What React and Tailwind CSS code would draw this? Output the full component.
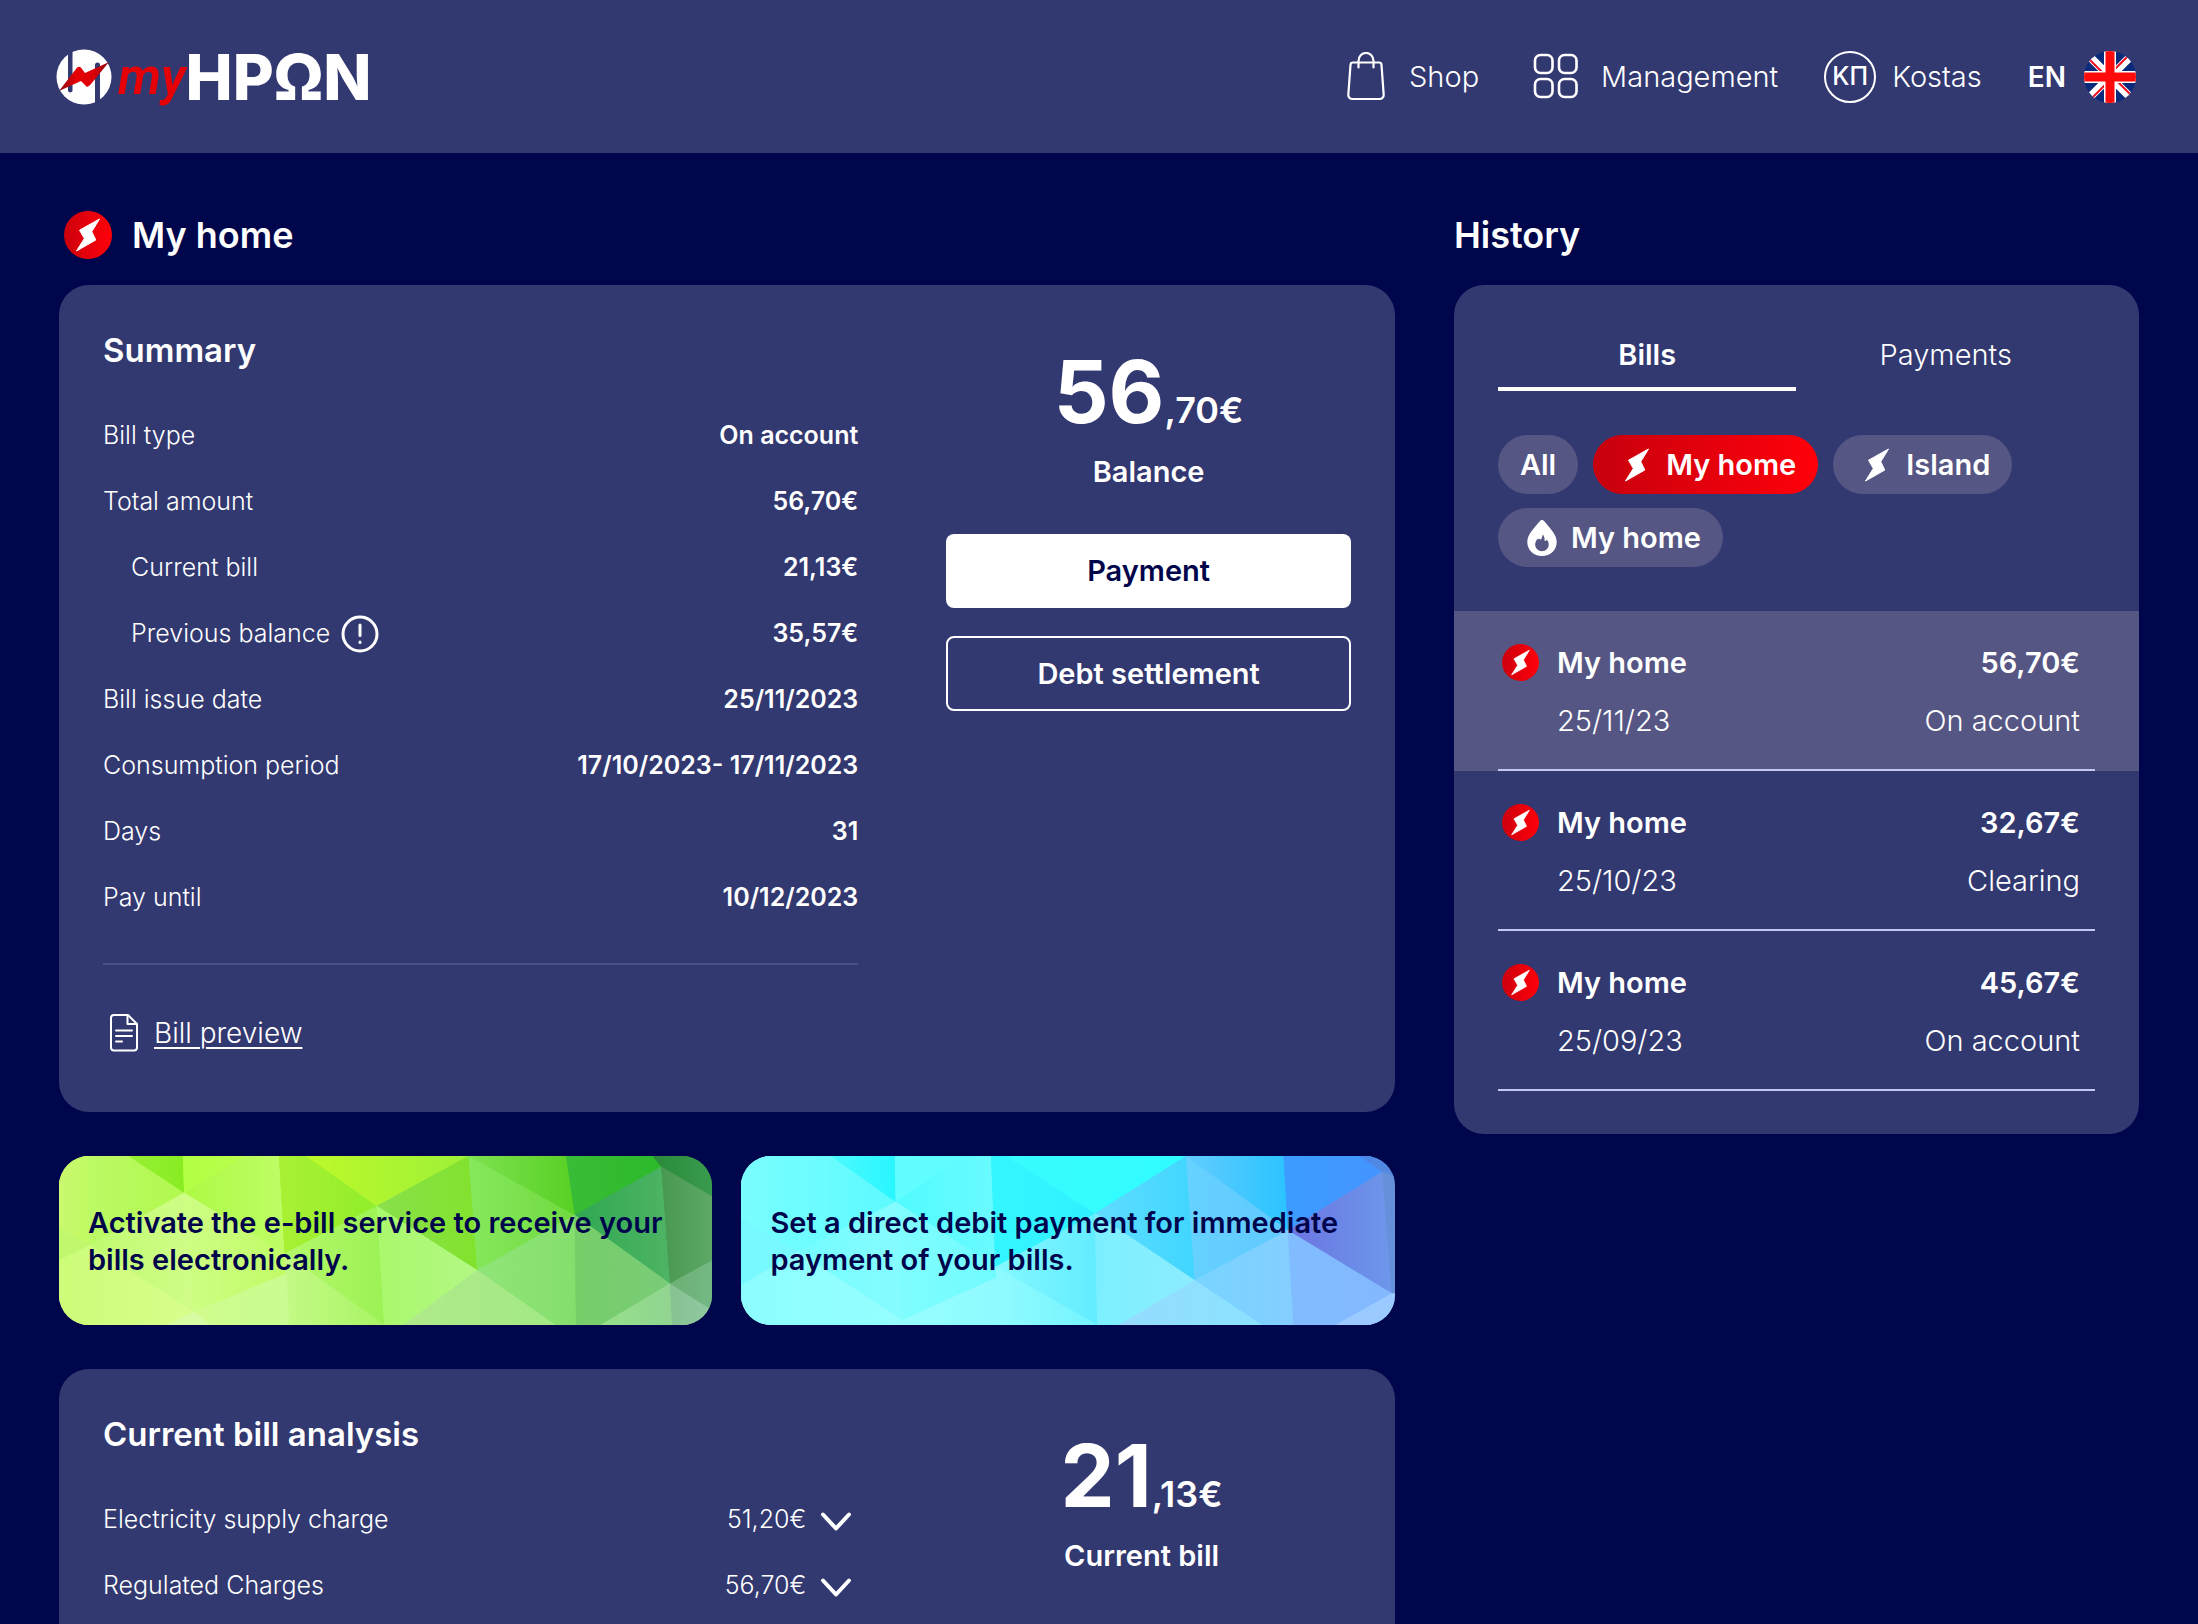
import React, { useState } from 'react';

const summaryRows = [
  { label: 'Bill type', value: 'On account' },
  { label: 'Total amount', value: '56,70€' },
  { label: 'Current bill', value: '21,13€', nested: true },
  { label: 'Previous balance', value: '35,57€', nested: true, info: true },
  { label: 'Bill issue date', value: '25/11/2023' },
  { label: 'Consumption period', value: '17/10/2023- 17/11/2023' },
  { label: 'Days', value: '31' },
  { label: 'Pay until', value: '10/12/2023' },
];

const charges = [
  { label: 'Electricity supply charge', value: '51,20€' },
  { label: 'Regulated Charges', value: '56,70€' },
];

const filters = [
  { id: 'all', label: 'All' },
  { id: 'home-power', label: 'My home', icon: 'bolt' },
  { id: 'island', label: 'Island', icon: 'bolt' },
  { id: 'home-gas', label: 'My home', icon: 'flame' },
];

const bills = [
  { id: 1, name: 'My home', date: '25/11/23', amount: '56,70€', type: 'On account' },
  { id: 2, name: 'My home', date: '25/10/23', amount: '32,67€', type: 'Clearing' },
  { id: 3, name: 'My home', date: '25/09/23', amount: '45,67€', type: 'On account' },
];

// facets: [points, left fill, right fill]
const greenFacets = [
  ['19,28 85,28 90,295 19,245', '#cbf870', '#c0fb62'],
  ['85,28 180,28 308,138 90,295', '#bcfa66', '#b2f84e'],
  ['180,28 305,28 308,138', '#98f034', '#88ec22'],
  ['305,28 450,28 308,138', '#b2ff44', '#baff4c'],
  ['450,28 527,28 540,320 308,138', '#aef944', '#bffd66'],
  ['90,295 308,138 330,495', '#c0fb70', '#d0fd88'],
  ['308,138 540,320 545,380 330,495', '#cefe84', '#c0fb66'],
  ['527,28 590,28 753,178 540,320', '#aaf034', '#90ee2a'],
  ['590,28 965,28 753,178', '#bcf92a', '#9ef038'],
  ['753,178 965,28 985,370', '#8ae04c', '#82e22c'],
  ['965,28 1210,205 985,370', '#86e85c', '#70da40'],
  ['965,28 1190,28 1210,205', '#7ee250', '#58d024'],
  ['1190,28 1390,28 1410,60 1210,205', '#3abc36', '#2cba2a'],
  ['1410,60 1210,205 1430,410', '#30a852', '#4eb464'],
  ['1390,28 1528,28 1528,150 1410,60', '#2a8a3a', '#3a9a4e'],
  ['1410,60 1528,150 1528,340 1430,410', '#489850', '#5ea868'],
  ['753,178 540,320 770,534', '#b4f86a', '#9cf254'],
  ['753,178 985,370 815,534 770,534', '#aaf86c', '#b2f884'],
  ['540,320 770,534 550,534', '#c4fa86', '#a8f464'],
  ['985,370 1210,205 1213,534 1165,534', '#90e678', '#84de6c'],
  ['985,370 1165,534 815,534', '#b0ea8a', '#a2e984'],
  ['1210,205 1430,410 1270,534 1213,534', '#76ce68', '#7acc78'],
  ['1430,410 1270,534 1435,534', '#98e08a', '#90d490'],
  ['1430,410 1435,534 1528,534 1528,490', '#86c292', '#92c8a2'],
  ['1430,410 1528,340 1528,490', '#6cb074', '#74b884'],
  ['19,245 90,295 19,340', '#bff86c', '#bff86c'],
  ['19,340 90,295 330,495 270,534 19,534', '#ccfc78', '#d8fe8c'],
  ['330,495 545,380 550,534 370,534', '#d0fc8c', '#c8fc92'],
  ['330,495 370,534 270,534', '#d8fca4', '#d8fca4'],
];

const blueFacets = [
  ['28,28 158,28 160,315 28,215', '#7cfdff', '#6cfdff'],
  ['158,28 235,28 385,165 160,315', '#70fdff', '#5cfaff'],
  ['235,28 383,28 385,165', '#4cfaff', '#28f6ff'],
  ['383,28 545,28 385,165', '#62fdff', '#5efdff'],
  ['545,28 605,28 615,360 385,165', '#50fbff', '#6afbff'],
  ['160,315 385,165 400,520', '#74fcff', '#86fcff'],
  ['385,165 615,360 620,390 400,520', '#80fdff', '#70fbff'],
  ['605,28 640,28 845,200 615,360', '#34f6ff', '#30f0ff'],
  ['640,28 1055,28 845,200', '#38fcff', '#30fcff'],
  ['845,200 1055,28 1075,400', '#60dcff', '#40d6ff'],
  ['1055,28 1290,250 1075,400', '#66d2ff', '#60c8ff'],
  ['1055,28 1280,28 1290,250', '#62ccff', '#2ac4ff'],
  ['1280,28 1455,28 1508,75 1290,250', '#3c9cff', '#4494ff'],
  ['1508,75 1290,250 1530,440', '#6c74e2', '#6c98ea'],
  ['1455,28 1536,28 1536,90 1508,75', '#4888ec', '#5888dc'],
  ['1508,75 1536,90 1536,440 1530,440', '#6590da', '#6590da'],
  ['845,200 615,360 850,534', '#84f8ff', '#62ecff'],
  ['845,200 1075,400 900,534 850,534', '#7cf0ff', '#8cecff'],
  ['615,360 850,534 628,534', '#90fbff', '#74f4ff'],
  ['1075,400 1290,250 1303,534 1230,534', '#78d4ff', '#84ceff'],
  ['1075,400 1230,534 900,534', '#94dcff', '#8ce2ff'],
  ['1290,250 1530,440 1400,534 1303,534', '#80bcff', '#84b8ff'],
  ['1530,440 1536,440 1536,534 1400,534', '#9acaff', '#9acaff'],
  ['28,215 160,315 28,415', '#78f9ff', '#78f9ff'],
  ['28,415 160,315 400,520 380,534 28,534', '#8cfeff', '#96feff'],
  ['400,520 620,390 628,534 380,534', '#96feff', '#90faff'],
];

const BoltShape = () => (
  <path
    d="M35.500 8 15.500 19.200l4.800 8.300L12.500 40 31.800 29l-4-8.300z"
    fill="#fff"
    stroke="#fff"
    strokeWidth="1"
    strokeLinejoin="round"
  />
);

const BoltIcon = ({ className }) => (
  <svg viewBox="2 2 44 44" className={className} aria-hidden="true">
    <BoltShape />
  </svg>
);

const BoltBadge = ({ className }) => (
  <svg viewBox="0 0 48 48" className={className} aria-hidden="true">
    <defs>
      <linearGradient id="badge" x1="0" y1="0" x2="1" y2="0">
        <stop offset="0" stopColor="#cc000d" />
        <stop offset="1" stopColor="#ff000a" />
      </linearGradient>
    </defs>
    <circle cx="24" cy="24" r="24" fill="url(#badge)" />
    <BoltShape />
  </svg>
);

const FlameIcon = ({ className }) => (
  <svg viewBox="0 0 44 44" className={className} aria-hidden="true">
    <path
      fillRule="evenodd"
      fill="#fff"
      d="M22 4c1 0 1.800.6 2.500 1.500C30 12.500 36.700 18.500 36.700 26c0 8-6.200 14-14.700 14S7.300 34 7.300 26C7.300 18.500 14 12.500 19.500 5.500 20.200 4.600 21 4 22 4zM22.600 18.500c-.2 2.200-.8 4-1.900 5.300-.8-1.200-2-1.500-3.300-.5-1.400 1.400-2.200 3.200-2.200 5.200 0 3.800 3 6.700 6.800 6.700s6.700-2.900 6.700-6.700c0-2-.7-3.500-1.900-4.700-.6 1-1.200 1.300-2.200 1.200.2-2.700-.4-4.800-2-6.500z"
    />
  </svg>
);

const LogoMark = () => (
  <svg viewBox="0 0 56 56" className="size-14" aria-hidden="true">
    <defs>
      <linearGradient id="spark" x1="0" y1="0" x2="1" y2="0">
        <stop offset="0" stopColor="#8e0a10" />
        <stop offset="0.35" stopColor="#e60005" />
        <stop offset="0.7" stopColor="#d90006" />
        <stop offset="1" stopColor="#8e0a10" />
      </linearGradient>
    </defs>
    <circle cx="28" cy="28" r="27.500" fill="#fff" />
    <path d="M12 4v38a2.500 2.500 0 0 0 4.500 0V2H12zM39 55V16a2.500 2.500 0 0 1 5 0v38z" fill="#323870" />
    <path d="M3 42 20 20c2-3 4-3 6 0l3 4 24-11-18 22c-3 3-4 4-6 1l-4-4z" fill="url(#spark)" />
  </svg>
);

const BagIcon = () => (
  <svg viewBox="0 0 38 50" className="h-[50px] w-[38px]" fill="none" stroke="#fff" strokeWidth="2.200" strokeLinecap="round" aria-hidden="true">
    <path d="M6 10.500h26a2.500 2.500 0 0 1 2.500 2.300l2.200 30a4 4 0 0 1-4 4.200H5.300a4 4 0 0 1-4-4.200l2.200-30A2.500 2.500 0 0 1 6 10.500z" />
    <path d="M11.500 15.500V9a7.500 8 0 0 1 15 0v6.500" />
  </svg>
);

const AppsIcon = () => (
  <svg viewBox="0 0 48 48" className="size-12" fill="none" stroke="#fff" strokeWidth="2.600" aria-hidden="true">
    <rect x="2" y="2" width="17.500" height="18" rx="5.500" />
    <rect x="26" y="2" width="17.500" height="18" rx="5.500" />
    <rect x="2" y="26" width="17.500" height="18" rx="5.500" />
    <rect x="26" y="26" width="17.500" height="18" rx="5.500" />
  </svg>
);

const FlagIcon = () => (
  <svg viewBox="0 0 52 52" className="size-[52px]" aria-hidden="true">
    <clipPath id="flag">
      <circle cx="26" cy="26" r="26" />
    </clipPath>
    <g clipPath="url(#flag)">
      <path d="M0 0h52v52H0z" fill="#0a2a7c" />
      <path d="M0 0l52 52M52 0L0 52" stroke="#fff" strokeWidth="8" />
      <path d="M1 4l22 22M3 52l22-22M51 48L29 26M49 0L27 22" stroke="#f01020" strokeWidth="2" />
      <path d="M26 0v52M0 26h52" stroke="#fff" strokeWidth="12" />
      <path d="M26 0v52M0 26h52" stroke="#ff0a0a" strokeWidth="9" />
    </g>
  </svg>
);

const DocumentIcon = () => (
  <svg viewBox="0 0 44 44" className="size-11" fill="none" stroke="#fff" strokeWidth="2" strokeLinecap="round" strokeLinejoin="round" aria-hidden="true">
    <path d="M11 4h14l9 9v23.500a3 3 0 0 1-3 3H11a3 3 0 0 1-3-3V7a3 3 0 0 1 3-3z" />
    <path d="M24.500 4.500V13H34M13 19.500h16M13 25h16M13 30.500h6" />
  </svg>
);

const InfoIcon = () => (
  <svg viewBox="0 0 40 40" className="size-10" fill="none" stroke="#fff" strokeWidth="3" strokeLinecap="round" aria-hidden="true">
    <circle cx="20" cy="20" r="17" />
    <path d="M20 11v10.500M20 28v.5" />
  </svg>
);

const ChevronIcon = () => (
  <svg viewBox="0 0 44 44" className="size-11" fill="none" stroke="#fff" strokeWidth="4" strokeLinecap="round" strokeLinejoin="round" aria-hidden="true">
    <path d="M9 16.500l13 14 13-14" />
  </svg>
);

const Header = () => (
  <header className="flex h-[153px] items-center justify-between bg-[#323870] pr-[62px] pl-14">
    <a href="#" className="flex items-center">
      <LogoMark />
      <span className="ml-1.5 font-['Roboto',sans-serif] text-[51px] leading-[60px] font-semibold text-[#e60005] italic">my</span>
      <span className="text-[63px] leading-[60px] font-extrabold">HPΩN</span>
    </a>
    <nav className="flex items-center gap-[46px] text-[29px] font-light">
      <a href="#" className="mr-2 flex items-center gap-6">
        <BagIcon />
        Shop
      </a>
      <a href="#" className="flex items-center gap-5">
        <AppsIcon />
        Management
      </a>
      <a href="#" className="flex items-center gap-4">
        <span className="flex size-[52px] items-center justify-center rounded-full border-2 border-white text-[25px] font-medium">ΚΠ</span>
        Kostas
      </a>
      <button type="button" className="flex items-center gap-[18px] text-[28px] font-semibold">
        EN
        <FlagIcon />
      </button>
    </nav>
  </header>
);

const Amount = ({ whole, cents, label }) => (
  <div className="text-center">
    <p className="text-[86px] leading-[92px] font-bold">
      {whole}
      <span className="text-[36px] leading-none font-semibold">{cents}</span>
    </p>
    <p className="mt-3 text-[29px] leading-[44px] font-semibold">{label}</p>
  </div>
);

const Summary = () => (
  <section className="grid grid-cols-[28fr_15fr] gap-[88px] rounded-[30px] bg-[#323870] px-11 pt-[43px] pb-[55px]">
    <div>
      <h2 className="mb-[31px] text-[33px] leading-[44px] font-semibold">Summary</h2>
      <dl className="text-[25px]">
        {summaryRows.map((row) => (
          <div key={row.label} className="flex h-[66px] items-center justify-between">
            <dt className={row.nested ? 'flex items-center gap-2.5 pl-7 font-light' : 'font-light'}>
              {row.label}
              {row.info && (
                <button type="button" aria-label="More about the previous balance">
                  <InfoIcon />
                </button>
              )}
            </dt>
            <dd className="font-semibold">{row.value}</dd>
          </div>
        ))}
      </dl>
      <hr className="mt-8 border-t-2 border-[#4b5083]" />
      <a href="#" className="mt-11 flex h-12 items-center gap-[7px] text-[28px] font-light">
        <DocumentIcon />
        <span className="underline decoration-2 underline-offset-4">Bill preview</span>
      </a>
    </div>
    <div className="pt-[18px]">
      <Amount whole="56" cents=",70€" label="Balance" />
      <button type="button" className="mt-10 h-[74px] w-full rounded-lg bg-white text-[29px] font-semibold text-[#00054b]">
        Payment
      </button>
      <button type="button" className="mt-7 h-[75px] w-full rounded-lg border-2 border-white text-[29px] font-semibold">
        Debt settlement
      </button>
    </div>
  </section>
);

const Banner = ({ name, facets, viewBox, children }) => (
  <a href="#" className="relative flex h-[169px] items-center overflow-hidden rounded-[30px] px-[29px] text-[29px] leading-[37px] font-semibold text-[#00054b]">
    <svg viewBox={viewBox} preserveAspectRatio="none" className="absolute inset-0 h-full w-full" aria-hidden="true">
      <defs>
        {facets.map(([points, from, to], i) => (
          <linearGradient key={points} id={`${name}-${i}`} x1="0" y1="0" x2="1" y2="0">
            <stop offset="0" stopColor={from} />
            <stop offset="1" stopColor={to} />
          </linearGradient>
        ))}
      </defs>
      {/* stroked copies below close the seams between the facets */}
      {facets.map(([points, from], i) => (
        <polygon key={points} points={points} fill={from} stroke={`url(#${name}-${i})`} strokeWidth="4" strokeLinejoin="round" />
      ))}
      {facets.map(([points], i) => (
        <polygon key={points} points={points} fill={`url(#${name}-${i})`} />
      ))}
    </svg>
    <span className="relative">{children}</span>
  </a>
);

const Analysis = () => (
  <section className="grid grid-cols-[28fr_15fr] gap-[88px] rounded-[30px] bg-[#323870] px-11 pt-[43px] pb-11">
    <div>
      <h2 className="mb-[31px] text-[33px] leading-[44px] font-semibold">Current bill analysis</h2>
      <ul className="text-[25px] font-light">
        {charges.map((charge) => (
          <li key={charge.label}>
            <button type="button" className="flex h-[66px] w-full items-center">
              {charge.label}
              <span className="mr-2 ml-auto">{charge.value}</span>
              <ChevronIcon />
            </button>
          </li>
        ))}
      </ul>
    </div>
    <div className="pt-[18px] pr-3.5">
      <Amount whole="21" cents=",13€" label="Current bill" />
    </div>
  </section>
);

const History = () => {
  const [tab, setTab] = useState('bills');
  const [filter, setFilter] = useState('home-power');
  const [selected, setSelected] = useState(1);

  return (
    <section className="rounded-[30px] bg-[#323870] pt-11 pb-[43px]">
      <div className="mx-11 grid grid-cols-2 text-[29px]">
        <button
          type="button"
          onClick={() => setTab('bills')}
          className={`h-[62px] border-b-4 pb-[6px] ${tab === 'bills' ? 'border-white font-semibold' : 'border-transparent font-light'}`}
        >
          Bills
        </button>
        <button
          type="button"
          onClick={() => setTab('payments')}
          className={`h-[62px] border-b-4 pb-[6px] ${tab === 'payments' ? 'border-white font-semibold' : 'border-transparent font-light'}`}
        >
          Payments
        </button>
      </div>
      <div className="mx-11 mt-11 flex flex-wrap gap-x-[15px] gap-y-[14px] text-[29px] font-semibold">
        {filters.map((item) => (
          <button
            key={item.id}
            type="button"
            onClick={() => setFilter(item.id)}
            className={`flex h-[59px] items-center gap-[7px] rounded-full px-[22px] ${filter === item.id ? 'bg-linear-to-r from-[#c8000d] to-[#ff000a]' : 'bg-[#555684]'}`}
          >
            {item.icon === 'bolt' && <BoltIcon className="size-11" />}
            {item.icon === 'flame' && <FlameIcon className="size-11" />}
            {item.label}
          </button>
        ))}
      </div>
      <ul className="mt-11 text-[29px] leading-[58px]">
        {bills.map((bill) => (
          <li key={bill.id} className={bill.id === selected ? 'bg-[#555684] px-11' : 'px-11'}>
            <button
              type="button"
              onClick={() => setSelected(bill.id)}
              className="flex w-full border-b-2 border-[#c3c6f2] pt-[23px] pr-[15px] pb-[19px] pl-1 text-left"
            >
              <BoltBadge className="mt-[10px] mr-[18px] size-[37px]" />
              <span className="flex-1">
                <span className="block font-semibold">{bill.name}</span>
                <span className="block font-light">{bill.date}</span>
              </span>
              <span className="text-right">
                <span className="block font-semibold">{bill.amount}</span>
                <span className="block font-light">{bill.type}</span>
              </span>
            </button>
          </li>
        ))}
      </ul>
    </section>
  );
};

const App = () => {
  return (
    <div className="min-h-screen bg-[#00064b] font-['Inter',sans-serif] text-white">
      <Header />
      <main className="grid grid-cols-[39fr_20fr] items-start gap-[59px] px-[59px] pt-[52px]">
        <div>
          <h1 className="mb-5 flex h-[60px] items-center gap-5 pl-[5px] text-[36px] font-semibold">
            <BoltBadge className="size-12" />
            My home
          </h1>
          <Summary />
          <div className="my-11 grid grid-cols-2 gap-[29px]">
            <Banner name="ebill" facets={greenFacets} viewBox="19 28 1509 506">
              Activate the e-bill service to receive your bills electronically.
            </Banner>
            <Banner name="debit" facets={blueFacets} viewBox="28 28 1508 506">
              Set a direct debit payment for immediate payment of your bills.
            </Banner>
          </div>
          <Analysis />
        </div>
        <aside>
          <h2 className="mb-5 flex h-[60px] items-center text-[36px] font-semibold">History</h2>
          <History />
        </aside>
      </main>
    </div>
  );
};

export default App;
